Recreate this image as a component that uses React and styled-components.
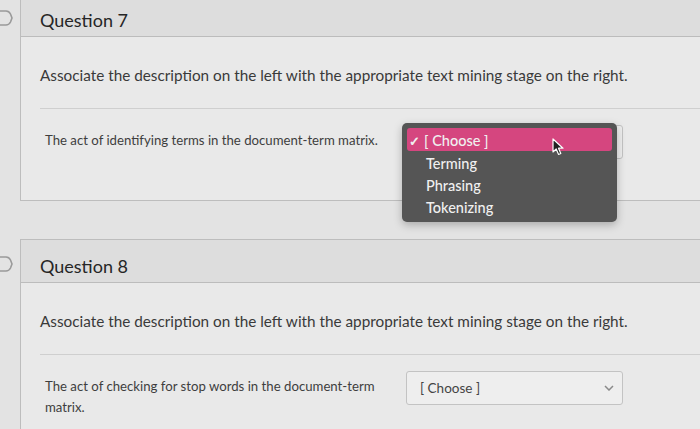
import styled, { createGlobalStyle } from "styled-components";

const GlobalStyle = createGlobalStyle`
  html, body {
    margin: 0;
    padding: 0;
    background: #e3e3e3;
    overflow: hidden;
  }
  body {
    font-family: Lato, "Open Sans", sans-serif;
    color: #333;
  }
`;

const questions = [
  {
    number: 7,
    prompt:
      "Associate the description on the left with the appropriate text mining stage on the right.",
    description: "The act of identifying terms in the document-term matrix.",
    open: true,
  },
  {
    number: 8,
    prompt:
      "Associate the description on the left with the appropriate text mining stage on the right.",
    description: "The act of checking for stop words in the document-term matrix.",
    open: false,
  },
];

const options = ["[ Choose ]", "Terming", "Phrasing", "Tokenizing"];

function FlagIcon() {
  return (
    <svg width="20" height="20" viewBox="0 0 20 20">
      <path
        d="M-4 3 L6 3 Q9 3 10.5 6 L12 10 L10.5 14 Q9 17 6 17 L-4 17"
        fill="none"
        stroke="#9a9a9a"
        strokeWidth="1.6"
      />
    </svg>
  );
}

function Cursor() {
  return (
    <svg width="13" height="18" viewBox="0 0 13 18">
      <path
        d="M1 1 L1 14 L4.2 11 L6.6 16.5 L8.8 15.5 L6.5 10.2 L11 10.2 Z"
        fill="#222"
        stroke="#fff"
        strokeWidth="1.2"
        strokeLinejoin="round"
      />
    </svg>
  );
}

function Chevron() {
  return (
    <svg width="10" height="6" viewBox="0 0 10 6">
      <path d="M1 1 L5 5 L9 1" fill="none" stroke="#8a8a8a" strokeWidth="1.5" />
    </svg>
  );
}

function Question({ number, prompt, description, open }) {
  return (
    <QuestionRow>
      <Gutter>
        <FlagIcon />
      </Gutter>
      <Card>
        <Header>Question {number}</Header>
        <Body>
          <Prompt>{prompt}</Prompt>
          <Divider />
          <MatchRow>
            <Description>{description}</Description>
            <SelectWrap>
              <Select>
                <span>[ Choose ]</span>
                <Chevron />
              </Select>
              {open && (
                <Menu>
                  {options.map((opt, i) => (
                    <MenuItem key={opt} $active={i === 0}>
                      {i === 0 && <Check>✓</Check>}
                      {opt}
                    </MenuItem>
                  ))}
                  <CursorSpot>
                    <Cursor />
                  </CursorSpot>
                </Menu>
              )}
            </SelectWrap>
          </MatchRow>
        </Body>
      </Card>
    </QuestionRow>
  );
}

export default function App() {
  return (
    <>
      <GlobalStyle />
      <Page>
        {questions.map((q) => (
          <Question key={q.number} {...q} />
        ))}
      </Page>
    </>
  );
}

const Page = styled.div`
  display: flex;
  flex-direction: column;
  gap: 38px;
  margin-top: -7px;
  width: 740px;
`;

const QuestionRow = styled.div`
  display: flex;
  align-items: flex-start;
`;

const Gutter = styled.div`
  width: 20px;
  flex: none;
  padding-top: 15px;
  display: flex;
`;

const Card = styled.section`
  flex: 1;
  border: 1px solid #bdbdbd;
  border-right: none;
  background: #e9e9e9;
`;

const Header = styled.h2`
  margin: 0;
  height: 43px;
  box-sizing: border-box;
  display: flex;
  align-items: center;
  padding: 9px 0 0 19px;
  background: #dddddd;
  border-bottom: 1px solid #bcbcbc;
  font-size: 18px;
  font-weight: 400;
  color: #262626;
`;

const Body = styled.div`
  padding: 28px 0 41px 19px;
`;

const Prompt = styled.p`
  margin: 0;
  font-size: 15.3px;
  line-height: 20px;
  color: #3a3a3a;
`;

const Divider = styled.hr`
  margin: 23px 0 0 0;
  border: none;
  border-top: 1px solid #cfcfcf;
`;

const MatchRow = styled.div`
  display: flex;
  align-items: flex-start;
  gap: 20px;
  padding: 16px 0 0 5px;
`;

const Description = styled.div`
  width: 341px;
  flex: none;
  padding-top: 5px;
  font-size: 13.2px;
  line-height: 21px;
  color: #3e3e3e;
`;

const SelectWrap = styled.div`
  position: relative;
  width: 217px;
  flex: none;
`;

const Select = styled.div`
  height: 34px;
  box-sizing: border-box;
  border: 1px solid #c3c3c3;
  border-radius: 3px;
  background: #eeeeee;
  display: flex;
  align-items: center;
  justify-content: space-between;
  padding: 0 8px 0 13px;
  font-size: 13.5px;
  color: #444;
`;

const Menu = styled.div`
  position: absolute;
  left: -4px;
  top: -2px;
  width: 215px;
  box-sizing: border-box;
  padding: 5px 5px 5px;
  background: #555555;
  border-radius: 5px;
  box-shadow: 0 3px 8px rgba(0, 0, 0, 0.25);
`;

const MenuItem = styled.div`
  position: relative;
  height: ${(p) => (p.$active ? "23px" : "22px")};
  display: flex;
  align-items: center;
  padding: 2px 0 0 ${(p) => (p.$active ? "14px" : "19px")};
  box-sizing: border-box;
  border-radius: 3px;
  font-size: 14.5px;
  font-weight: 500;
  color: #f0f0f0;
  background: ${(p) => (p.$active ? "#d5467f" : "transparent")};
`;

const Check = styled.span`
  font-size: 13px;
  font-weight: 700;
  margin-right: 3px;
  margin-left: -12px;
  width: 12px;
`;

const CursorSpot = styled.div`
  position: absolute;
  left: 150px;
  top: 15px;
  line-height: 0;
`;
